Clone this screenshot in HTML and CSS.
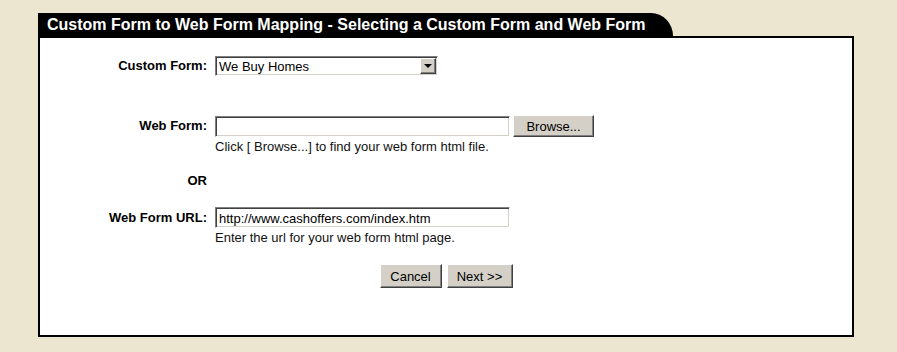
FILE: index.html
```html
<!DOCTYPE html>
<html lang="en">
	<head>
		<meta charset="UTF-8" />
		<title>Custom Form to Web Form Mapping</title>
		<link rel="stylesheet" href="styles.css">
	</head>
	<body>
		<div class="page">
			<div class="tab">Custom Form to Web Form Mapping - Selecting a Custom Form and Web Form</div>
			<div class="panel">
				<div class="row row-first">
					<label class="label" for="customForm">Custom Form:</label>
					<span class="select-wrap">
						<select id="customForm" class="select">
							<option>We Buy Homes</option>
						</select>
						<span class="select-arrow"></span>
					</span>
				</div>

				<div class="row row-web">
					<label class="label" for="webForm">Web Form:</label>
					<div class="control">
						<div class="line">
							<input type="text" id="webForm" class="field">
							<button class="btn btn-browse">Browse...</button>
						</div>
						<div class="hint">Click [ Browse...] to find your web form html file.</div>
					</div>
				</div>

				<div class="row row-or">
					<span class="label">OR</span>
				</div>

				<div class="row row-url">
					<label class="label" for="webUrl">Web Form URL:</label>
					<div class="control">
						<div class="line">
							<input type="text" id="webUrl" class="field" value="http://www.cashoffers.com/index.htm">
						</div>
						<div class="hint">Enter the url for your web form html page.</div>
					</div>
				</div>

				<div class="actions">
					<button class="btn btn-cancel">Cancel</button>
					<button class="btn btn-next">Next &gt;&gt;</button>
				</div>
			</div>
		</div>
	</body>
</html>
```

FILE: styles.css
```css
body {
	margin: 0;
	background: #ece5cf;
	font-family: "Liberation Sans", Arial, sans-serif;
	font-size: 13px;
	color: #000;
}

.page {
	padding: 13px 0 0 38px;
}

.tab {
	width: 635px;
	height: 23px;
	box-sizing: border-box;
	padding-left: 9px;
	background: #000;
	color: #fff;
	font-size: 16px;
	font-weight: bold;
	line-height: 24px;
	white-space: nowrap;
	border-top-right-radius: 22px 23px;
}

.panel {
	width: 816px;
	height: 301px;
	box-sizing: border-box;
	border: 2px solid #000;
	background: #fff;
	padding-top: 18px;
}

.row {
	display: flex;
	align-items: flex-start;
	gap: 8px;
}

.label {
	width: 167px;
	flex-shrink: 0;
	text-align: right;
	font-weight: bold;
	line-height: 21px;
}

.row-first {
	align-items: center;
}
.row-first .label {
	line-height: 20px;
}

.row-web {
	margin-top: 39px;
}

.row-or {
	margin-top: 19px;
}
.row-or .label {
	line-height: 15px;
}

.row-url {
	margin-top: 19px;
}

.line {
	display: flex;
	align-items: center;
	gap: 3px;
}

.hint {
	margin-top: 2px;
	font-size: 13px;
	line-height: 15px;
	color: #111;
}

/* classic sunken fields */
.field,
.select {
	font-family: "Liberation Sans", Arial, sans-serif;
	font-size: 13px;
	color: #000;
	background: #fff;
	box-sizing: border-box;
	border: 1px solid;
	border-color: #808080 #fff #fff #808080;
	box-shadow: inset 1px 1px #404040, inset -1px -1px #d4d0c8;
	outline: none;
	margin: 0;
}

.field {
	width: 295px;
	height: 21px;
	padding: 1px 3px 0;
}

.select-wrap {
	position: relative;
	display: inline-block;
}

.select {
	width: 223px;
	height: 20px;
	padding: 0 18px 0 3px;
	appearance: none;
	-webkit-appearance: none;
	border-radius: 0;
}

.select-arrow {
	position: absolute;
	top: 2px;
	right: 2px;
	width: 16px;
	height: 16px;
	box-sizing: border-box;
	background: #d4d0c8;
	border: 1px solid;
	border-color: #fff #404040 #404040 #fff;
	box-shadow: inset -1px -1px #808080;
	pointer-events: none;
}
.select-arrow::after {
	content: "";
	position: absolute;
	left: 3px;
	top: 5px;
	border-left: 4px solid transparent;
	border-right: 4px solid transparent;
	border-top: 4px solid #000;
}

/* classic raised buttons */
.btn {
	font-family: "Liberation Sans", Arial, sans-serif;
	font-size: 13px;
	color: #000;
	background: #d4d0c8;
	box-sizing: border-box;
	border: 1px solid;
	border-color: #fff #404040 #404040 #fff;
	box-shadow: inset -1px -1px #808080;
	padding: 0;
	cursor: pointer;
}

.btn-browse {
	width: 81px;
	height: 22px;
}

.actions {
	display: flex;
	justify-content: center;
	gap: 5px;
	margin-top: 19px;
}

.btn-cancel {
	width: 62px;
	height: 24px;
}

.btn-next {
	width: 66px;
	height: 24px;
}
```
